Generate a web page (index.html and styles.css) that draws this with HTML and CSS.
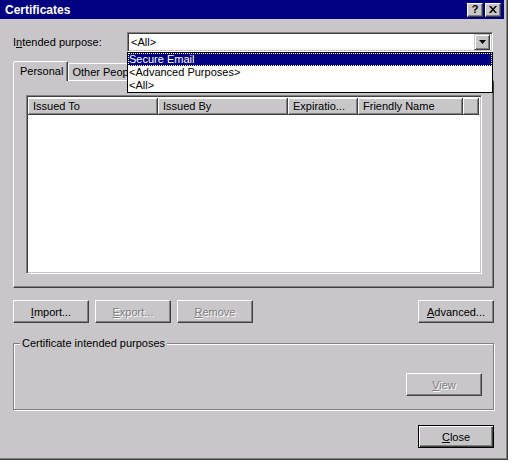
FILE: index.html
```html
<!DOCTYPE html>
<html lang="en">
<head>
    <meta charset="UTF-8">
    <title>Certificates</title>
    <link rel="stylesheet" href="styles.css">
</head>
<body>
    <div class="window">
        <div class="titlebar">
            <span class="title">Certificates</span>
            <div class="caption-buttons">
                <span class="cap-btn help">?</span>
                <span class="cap-btn">
                    <svg width="8" height="7" viewBox="0 0 8 7">
                        <path d="M0 0h2l2 2.5L6 0h2L5 3.5 8 7H6L4 4.5 2 7H0l3-3.5z" fill="#000"/>
                    </svg>
                </span>
            </div>
        </div>

        <div class="content">
            <div class="purpose-row">
                <label class="purpose-label">I<u>n</u>tended purpose:</label>
                <div class="combo">
                    <div class="combo-field">
                        <span class="combo-value">&lt;All&gt;</span>
                        <span class="combo-arrow">
                            <svg width="7" height="4" viewBox="0 0 7 4"><path d="M0 0h7L3.5 4z" fill="#000"/></svg>
                        </span>
                    </div>
                    <ul class="combo-list">
                        <li class="selected">Secure Email</li>
                        <li>&lt;Advanced Purposes&gt;</li>
                        <li>&lt;All&gt;</li>
                    </ul>
                </div>
            </div>

            <!-- the rest of the tab strip is hidden behind the open drop-down -->
            <div class="tabs">
                <span class="tab active">Personal</span>
                <span class="tab">Other Peop</span>
            </div>
            <div class="tab-panel">
                <div class="listview">
                    <div class="lv-header">
                        <span class="col col-to">Issued To</span>
                        <span class="col col-by">Issued By</span>
                        <span class="col col-exp">Expiratio...</span>
                        <span class="col col-name">Friendly Name</span>
                        <span class="col col-fill"></span>
                    </div>
                </div>
            </div>

            <div class="button-row">
                <button class="btn"><u>I</u>mport...</button>
                <button class="btn" disabled><u>E</u>xport...</button>
                <button class="btn" disabled><u>R</u>emove</button>
                <button class="btn push-right"><u>A</u>dvanced...</button>
            </div>

            <div class="group">
                <span class="group-label">Certificate intended purposes</span>
                <div class="group-body">
                    <button class="btn" disabled><u>V</u>iew</button>
                </div>
            </div>

            <div class="footer">
                <button class="btn default"><u>C</u>lose</button>
            </div>
        </div>
    </div>
</body>
</html>
```

FILE: styles.css
```css
body {
    margin: 0;
    background: #ffffff;
    font-family: Tahoma, "Liberation Sans", Arial, sans-serif;
    font-size: 11px;
    color: #000;
}

.window {
    width: 508px;
    height: 460px;
    box-sizing: border-box;
    background: #c8c6c8;
    border-right: 1px solid #404040;
    border-bottom: 1px solid #404040;
    box-shadow: inset -1px -1px #808080;
    display: flex;
    flex-direction: column;
    overflow: hidden;
}

/* title bar */
.titlebar {
    height: 19px;
    margin-right: 3px;
    background: #000080;
    color: #fff;
    display: flex;
    align-items: center;
    padding: 0 3px 0 5px;
}
.title {
    font-weight: bold;
    font-size: 12px;
    flex: 1;
}
.caption-buttons {
    display: flex;
    gap: 2px;
}
.cap-btn {
    width: 16px;
    height: 14px;
    box-sizing: border-box;
    background: #c8c6c8;
    border: 1px solid;
    border-color: #fff #404040 #404040 #fff;
    box-shadow: inset -1px -1px #808080;
    display: flex;
    align-items: center;
    justify-content: center;
    color: #000;
    font-weight: bold;
    font-size: 11px;
    line-height: 1;
}

/* body of dialog */
.content {
    padding: 13px 13px 0 13px;
}

.purpose-row {
    display: flex;
    align-items: center;
    height: 20px;
}
.purpose-label {
    width: 114px;
}

.combo {
    position: relative;
    width: 366px;
    z-index: 2;
}
.combo-field {
    height: 20px;
    box-sizing: border-box;
    background: #fff;
    border: 1px solid;
    border-color: #808080 #fff #fff #808080;
    box-shadow: inset 1px 1px #404040, inset -1px -1px #c8c6c8;
    display: flex;
    align-items: center;
    padding: 0 2px 0 3px;
}
.combo-value {
    flex: 1;
}
.combo-arrow {
    width: 16px;
    height: 16px;
    box-sizing: border-box;
    background: #c8c6c8;
    border: 1px solid;
    border-color: #c8c6c8 #404040 #404040 #c8c6c8;
    box-shadow: inset 1px 1px #fff, inset -1px -1px #808080;
    display: flex;
    align-items: center;
    justify-content: center;
}
.combo-list {
    position: absolute;
    top: 20px;
    left: 0;
    right: 0;
    margin: 0;
    padding: 0;
    list-style: none;
    background: #fff;
    border: 1px solid #000;
}
.combo-list li {
    height: 13px;
    line-height: 13px;
    padding-left: 1px;
}
.combo-list li.selected {
    background: #000080;
    color: #fff;
    outline: 1px dotted #fff;
    outline-offset: -1px;
}

/* tabs */
.tabs {
    display: flex;
    margin-top: 8px;
    height: 20px;
    align-items: flex-end;
    white-space: nowrap;
}
.tab {
    height: 17px;
    box-sizing: border-box;
    padding: 2px 8px 0 3px;
    border: 1px solid;
    border-bottom: none;
    border-color: #fff #404040 transparent #fff;
    box-shadow: inset -1px 0 #808080;
    border-radius: 2px 2px 0 0;
}
.tab.active {
    height: 20px;
    padding: 3px 4px 0 6px;
    margin-bottom: -1px;
    position: relative;
    background: #c8c6c8;
    z-index: 1;
}

.tab-panel {
    height: 208px;
    box-sizing: border-box;
    border: 1px solid;
    border-color: #fff #404040 #404040 #fff;
    box-shadow: inset -1px -1px #808080;
    padding: 14px 11px 0 12px;
}

.listview {
    height: 179px;
    box-sizing: border-box;
    background: #fff;
    border: 1px solid;
    border-color: #808080 #fff #fff #808080;
    box-shadow: inset 1px 1px #404040, inset -1px -1px #c8c6c8;
    padding: 2px 2px 0 1px;
}
.lv-header {
    display: flex;
    height: 17px;
}
.col {
    height: 17px;
    box-sizing: border-box;
    background: #c8c6c8;
    border-right: 1px solid #404040;
    border-bottom: 1px solid #404040;
    box-shadow: inset 1px 1px #fff, inset -1px -1px #808080;
    padding: 2px 0 0 5px;
    white-space: nowrap;
    overflow: hidden;
}
.col-to { width: 130px; }
.col-by { width: 130px; }
.col-exp { width: 70px; }
.col-name { width: 105px; }
.col-fill { flex: 1; }

/* push buttons */
.btn {
    width: 76px;
    height: 23px;
    box-sizing: border-box;
    font-family: inherit;
    font-size: 11px;
    color: #000;
    background: #c8c6c8;
    border: 1px solid;
    border-color: #fff #404040 #404040 #fff;
    box-shadow: inset -1px -1px #808080;
    padding: 0;
}
.btn:disabled {
    color: #808080;
    text-shadow: 1px 1px #fff;
}
.btn.default {
    border: 1px solid #000;
    box-shadow: inset 1px 1px #fff, inset -1px -1px #404040, inset -2px -2px #808080;
}

.button-row {
    display: flex;
    gap: 6px;
    margin-top: 12px;
}
.push-right {
    margin-left: auto;
}

/* group box */
.group {
    margin-top: 20px;
    height: 67px;
    box-sizing: border-box;
    border: 1px solid #808080;
    box-shadow: inset 1px 1px #fff, 1px 1px #fff;
    padding: 0 11px 0 6px;
}
.group-label {
    display: inline-block;
    margin-top: -7px;
    padding: 0 2px;
    background: #c8c6c8;
    vertical-align: top;
    line-height: 13px;
}
.group-body {
    display: flex;
    justify-content: flex-end;
    margin-top: 17px;
}

.footer {
    display: flex;
    justify-content: flex-end;
    margin-top: 15px;
}
```
